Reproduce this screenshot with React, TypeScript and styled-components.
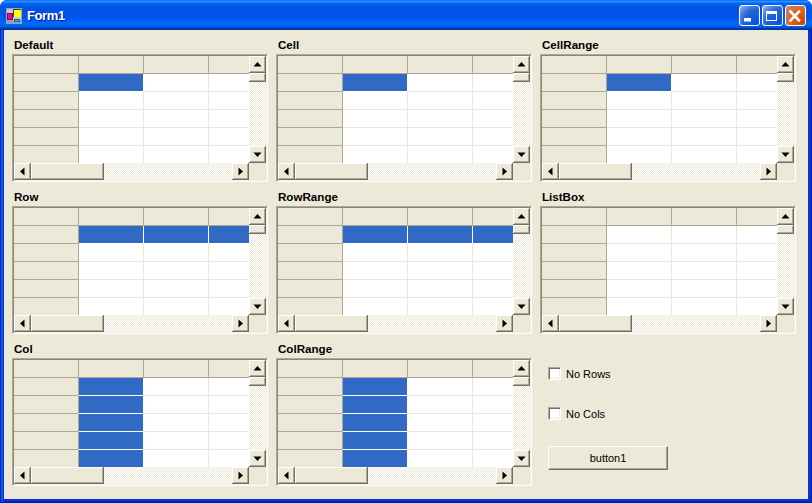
import React, { useId } from 'react';
import styled, { createGlobalStyle } from 'styled-components';

const GlobalStyle = createGlobalStyle`
  html, body {
    margin: 0;
    padding: 0;
    background: #fff;
  }
`;

const Window = styled.div`
  width: 812px;
  height: 503px;
  display: flex;
  flex-direction: column;
  border-radius: 7px 7px 0 0;
  overflow: hidden;
  font-family: 'Liberation Sans', Arial, sans-serif;
  background: #0831d9;
`;

const TitleBar = styled.div`
  height: 30px;
  flex: none;
  display: flex;
  align-items: center;
  padding: 0 6px;
  box-sizing: border-box;
  background: linear-gradient(
    180deg,
    #0058ee 0%,
    #3593ff 4%,
    #288eff 6%,
    #127dff 8%,
    #036ffc 10%,
    #0262ee 14%,
    #0057e5 20%,
    #0054e3 24%,
    #0055eb 56%,
    #005bf5 66%,
    #026afe 76%,
    #0062ef 86%,
    #0052d6 92%,
    #0040ab 94%,
    #003092 100%
  );
`;

const TitleText = styled.span`
  flex: 1;
  margin: 1px 0 0 5px;
  color: #fff;
  font-size: 13px;
  letter-spacing: -0.4px;
  font-weight: bold;
  text-shadow: 1px 1px 1px #0f1089;
`;

const CaptionButtons = styled.div`
  display: flex;
  gap: 2px;
`;

const CaptionButton = styled.div<{ $close?: boolean }>`
  width: 21px;
  height: 21px;
  box-sizing: border-box;
  border: 1px solid #fff;
  border-radius: 3px;
  display: flex;
  align-items: center;
  justify-content: center;
  background: ${p =>
    p.$close
      ? 'radial-gradient(circle at 85% 85%, #cc4600 0%, #dc6527 55%, #cd7546 70%, #e48d6c 100%)'
      : 'radial-gradient(circle at 90% 90%, #0054e9 0%, #2263d5 55%, #4479e4 70%, #a3bbec 100%)'};
`;

const Frame = styled.div`
  flex: 1;
  display: flex;
  min-height: 0;
  padding: 0 4px 4px 4px;
  background: #0831d9;
  box-shadow:
    inset 1px 0 0 #0427c4,
    inset -1px 0 0 #001ea0,
    inset 0 -1px 0 #001ea0,
    inset 2px 0 0 #0855dd,
    inset 3px 0 0 #0a5fe8,
    inset -2px 0 0 #0833d0,
    inset 0 -2px 0 #0427b8;
`;

const Client = styled.div`
  flex: 1;
  box-sizing: border-box;
  padding: 0 8px;
  background: #ece9d8;
  display: grid;
  grid-template-columns: repeat(3, 256px);
  grid-auto-rows: 152px;
  column-gap: 8px;
`;

const Group = styled.div`
  display: flex;
  flex-direction: column;
`;

const Label = styled.div`
  height: 24px;
  box-sizing: border-box;
  padding: 8px 0 0 2px;
  font-size: 11.6px;
  line-height: 13px;
  font-weight: bold;
  color: #000;
`;

const GridFrame = styled.div`
  width: 256px;
  height: 128px;
  box-sizing: border-box;
  display: grid;
  grid-template-columns: 235px 17px;
  grid-template-rows: 107px 17px;
  border: 1px solid;
  border-color: #aca899 #fff #fff #aca899;
  box-shadow: inset 1px 1px 0 #8a8777, inset -1px -1px 0 #f1efe2;
  padding: 1px;
`;

const Cells = styled.div`
  overflow: hidden;
  display: grid;
  grid-template-columns: repeat(4, 65px);
  grid-auto-rows: 18px;
  background: #fff;
`;

const Cell = styled.div<{ $fixed?: boolean; $selected?: boolean }>`
  box-sizing: border-box;
  border-style: solid;
  border-width: 0 1px 1px 0;
  border-color: ${p => (p.$fixed ? '#aca899' : p.$selected ? '#fff' : '#ece9d8')};
  background: ${p => (p.$fixed ? '#ece9d8' : p.$selected ? '#316ac5' : '#fff')};
`;

const ScrollBar = styled.div<{ $vertical?: boolean }>`
  display: flex;
  flex-direction: ${p => (p.$vertical ? 'column' : 'row')};
`;

const TrackBox = styled.div`
  flex: 1;
  min-width: 0;
  min-height: 0;
  overflow: hidden;

  svg {
    display: block;
  }
`;

// one pixel checker, same as the classic scrollbar track
const Track = () => {
  const id = useId();
  return (
    <TrackBox>
      <svg width="100%" height="100%" shapeRendering="crispEdges">
        <defs>
          <pattern id={id} width="2" height="2" patternUnits="userSpaceOnUse">
            <rect width="2" height="2" fill="#fff" />
            <rect width="1" height="1" fill="#ece9d8" />
            <rect x="1" y="1" width="1" height="1" fill="#ece9d8" />
          </pattern>
        </defs>
        <rect width="100%" height="100%" fill={`url(#${id})`} />
      </svg>
    </TrackBox>
  );
};

const raised = `
  box-sizing: border-box;
  background: #ece9d8;
  border-style: solid;
  border-width: 0 1px 1px 0;
  border-color: #716f64;
  box-shadow: inset 1px 1px 0 #fff, inset -1px -1px 0 #aca899;
`;

const ScrollButton = styled.div`
  ${raised}
  flex: none;
  width: 17px;
  height: 17px;
  display: flex;
  align-items: center;
  justify-content: center;
`;

const Thumb = styled.div<{ $vertical?: boolean }>`
  ${raised}
  flex: none;
  width: ${p => (p.$vertical ? '17px' : '73px')};
  height: ${p => (p.$vertical ? '9px' : '17px')};
`;

const Corner = styled.div`
  background: #ece9d8;
`;

type Direction = 'up' | 'down' | 'left' | 'right';

const ARROW_ROTATION: Record<Direction, number> = { up: 0, right: 90, down: 180, left: 270 };

const Arrow = ({ dir }: { dir: Direction }) => (
  <svg width="9" height="9" viewBox="0 0 9 9" style={{ transform: `rotate(${ARROW_ROTATION[dir]}deg)` }}>
    <polygon points="4.5,2 8.5,6.5 0.5,6.5" fill="#000" />
  </svg>
);

type Selection = { row?: number; col?: number; cell?: boolean };

const isSelected = (sel: Selection, r: number, c: number) => {
  if (sel.cell) return r === 1 && c === 1;
  if (sel.row !== undefined) return r === sel.row;
  if (sel.col !== undefined) return c === sel.col;
  return false;
};

const GridView = ({ title, sel }: { title: string; sel: Selection }) => {
  const cells = [];
  for (let r = 0; r < 6; r++) {
    for (let c = 0; c < 4; c++) {
      const fixed = r === 0 || c === 0;
      cells.push(<Cell key={`${r}-${c}`} $fixed={fixed} $selected={!fixed && isSelected(sel, r, c)} />);
    }
  }
  return (
    <Group>
      <Label>{title}</Label>
      <GridFrame>
        <Cells>{cells}</Cells>
        <ScrollBar $vertical>
          <ScrollButton>
            <Arrow dir="up" />
          </ScrollButton>
          <Thumb $vertical />
          <Track />
          <ScrollButton>
            <Arrow dir="down" />
          </ScrollButton>
        </ScrollBar>
        <ScrollBar>
          <ScrollButton>
            <Arrow dir="left" />
          </ScrollButton>
          <Thumb />
          <Track />
          <ScrollButton>
            <Arrow dir="right" />
          </ScrollButton>
        </ScrollBar>
        <Corner />
      </GridFrame>
    </Group>
  );
};

const Options = styled.div`
  display: flex;
  flex-direction: column;
  padding: 33px 0 0 8px;
`;

const CheckRow = styled.label`
  display: flex;
  align-items: center;
  height: 13px;
  margin-bottom: 27px;
  font-size: 11px;
  color: #000;
`;

const CheckBox = styled.span`
  width: 13px;
  height: 13px;
  box-sizing: border-box;
  margin-right: 5px;
  background: #fff;
  border: 1px solid;
  border-color: #aca899 #fff #fff #aca899;
  box-shadow: inset 1px 1px 0 #716f64, inset -1px -1px 0 #f1efe2;
`;

const PushButton = styled.div`
  width: 120px;
  height: 24px;
  margin-top: -1px;
  box-sizing: border-box;
  display: flex;
  align-items: center;
  justify-content: center;
  font-size: 11px;
  color: #000;
  background: #ece9d8;
  border-style: solid;
  border-width: 1px;
  border-color: #fff #716f64 #716f64 #fff;
  box-shadow: inset -1px -1px 0 #aca899;
`;

const IconSvg = styled.svg`
  flex: none;
  margin-top: 2px;
`;

const AppIcon = () => (
  <IconSvg width="16" height="16" viewBox="0 0 16 16" shapeRendering="crispEdges">
    <rect x="0" y="0" width="16" height="16" fill="#9aa0b4" />
    <rect x="1" y="1" width="14" height="14" fill="#c6c8d8" />
    <rect x="1" y="12" width="14" height="3" fill="#8ca2c8" />
    <rect x="1" y="5" width="5" height="6" fill="#ff0090" stroke="#70104a" strokeWidth="1" />
    <rect x="7" y="1" width="8" height="8" fill="#404040" />
    <rect x="8" y="2" width="7" height="7" fill="#ffff00" />
    <rect x="8" y="11" width="5" height="2" fill="#00d8d8" stroke="#102080" strokeWidth="0.6" />
  </IconSvg>
);

const CaptionIcon = ({ kind }: { kind: 'min' | 'max' | 'close' }) => {
  if (kind === 'min') {
    return (
      <svg width="19" height="19" viewBox="0 0 19 19">
        <rect x="4" y="12" width="7" height="3.5" fill="#fff" />
      </svg>
    );
  }
  if (kind === 'max') {
    return (
      <svg width="19" height="19" viewBox="0 0 19 19">
        <path d="M3 5h11v10H3z M4 8v6h9V8z" fill="#fff" fillRule="evenodd" />
      </svg>
    );
  }
  return (
    <svg width="19" height="19" viewBox="0 0 19 19">
      <path d="M4.5 5.5l8.5 9M13 5.5l-8.5 9" stroke="#fff" strokeWidth="2.6" strokeLinecap="square" />
    </svg>
  );
};

const GRIDS: { title: string; sel: Selection }[] = [
  { title: 'Default', sel: { cell: true } },
  { title: 'Cell', sel: { cell: true } },
  { title: 'CellRange', sel: { cell: true } },
  { title: 'Row', sel: { row: 1 } },
  { title: 'RowRange', sel: { row: 1 } },
  { title: 'ListBox', sel: {} },
  { title: 'Col', sel: { col: 1 } },
  { title: 'ColRange', sel: { col: 1 } },
];

export default function App() {
  return (
    <>
      <GlobalStyle />
      <Window>
        <TitleBar>
          <AppIcon />
          <TitleText>Form1</TitleText>
          <CaptionButtons>
            <CaptionButton>
              <CaptionIcon kind="min" />
            </CaptionButton>
            <CaptionButton>
              <CaptionIcon kind="max" />
            </CaptionButton>
            <CaptionButton $close>
              <CaptionIcon kind="close" />
            </CaptionButton>
          </CaptionButtons>
        </TitleBar>
        <Frame>
          <Client>
            {GRIDS.map(g => (
              <GridView key={g.title} title={g.title} sel={g.sel} />
            ))}
            <Options>
              <CheckRow>
                <CheckBox />
                No Rows
              </CheckRow>
              <CheckRow>
                <CheckBox />
                No Cols
              </CheckRow>
              <PushButton>button1</PushButton>
            </Options>
          </Client>
        </Frame>
      </Window>
    </>
  );
}
